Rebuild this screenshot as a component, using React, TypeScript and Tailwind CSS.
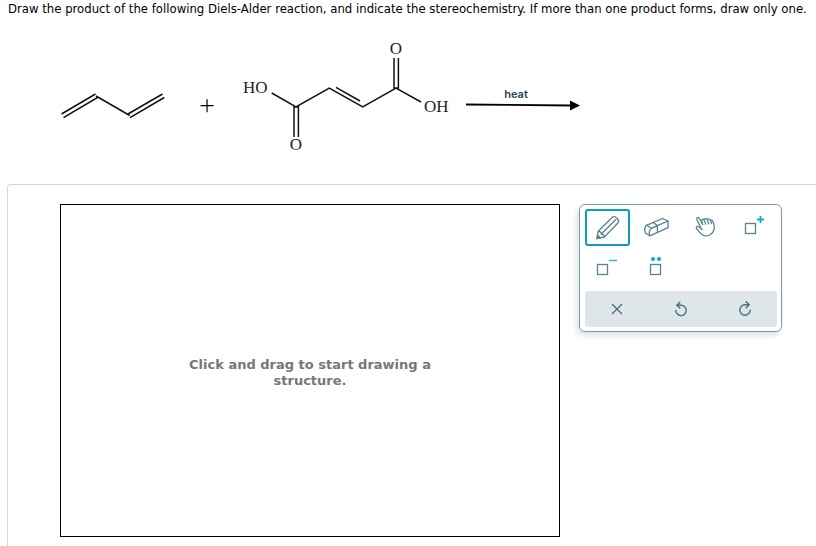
import type { ReactNode } from "react";

const tools: { label: string; icon: ReactNode; active?: boolean }[] = [
  { label: "Draw", icon: <PencilIcon />, active: true },
  { label: "Erase", icon: <EraserIcon /> },
  { label: "Move", icon: <HandIcon /> },
  { label: "Positive charge", icon: <PlusChargeIcon /> },
  { label: "Negative charge", icon: <MinusChargeIcon /> },
  { label: "Lone pair", icon: <LonePairIcon /> },
];

const actions: { label: string; icon: ReactNode }[] = [
  { label: "Clear", icon: <path d="M3 3L13 13M13 3L3 13" /> },
  {
    label: "Undo",
    icon: (
      <path d="M2.8 9A5.2 5.2 0 1 0 8 4.2H4M7.3 0.8L3.8 4.2L7.3 7.6" />
    ),
  },
  {
    label: "Redo",
    icon: (
      <path d="M13.2 8.8A5.2 5.2 0 1 1 8 3.8H12M8.7 0.4L12.2 3.8L8.7 7.2" />
    ),
  },
];

function ToolSvg({ children }: { children: ReactNode }) {
  return (
    <svg
      width="33"
      height="29"
      viewBox="0 0 33 29"
      fill="none"
      stroke="#5b8291"
      strokeWidth="1.3"
      strokeLinejoin="round"
      strokeLinecap="round"
      aria-hidden="true"
    >
      {children}
    </svg>
  );
}

function PencilIcon() {
  return (
    <ToolSvg>
      <path d="M6 25.5L7.2 18.3L21.3 4.2C23.4 2.4 28.8 6.2 27.4 9.5L13.4 24Z" />
      <path d="M7.2 18.3C9.2 18.1 10.2 19.2 10.3 21C12 21 13.2 22 13.4 24M10.3 21L24.6 6.8" />
      <path d="M6 25.5L6.5 22.2L9.3 24.6Z" fill="#5b8291" />
    </ToolSvg>
  );
}

function EraserIcon() {
  return (
    <ToolSvg>
      <path d="M6.5 12.3L22.5 5.5L28 8V14.7L9.8 22.8L5.6 20.2C4.4 17.5 4.7 14 6.5 12.3Z" />
      <path d="M13.2 9.4L17.4 12.6V19.3M17.4 12.6L28 8M6.5 12.3L11.6 15.3L17.4 12.6M11.6 15.3C9.4 17 8.8 20 9.8 22.8" />
    </ToolSvg>
  );
}

function HandIcon() {
  return (
    <ToolSvg>
      <path d="M11.8 14.5L7.8 6.3C7.2 4.6 9.2 3.6 10.2 5.1L13.6 11.3" />
      <path d="M13.6 11.3L12.8 8C12.5 6.1 14.5 5.6 15.2 7.2L16.8 11.2M15.3 7.2C15.1 5.5 17.3 5.1 18.1 6.8L19.7 10.8M18.3 7.2C18.2 5.6 20.2 5.3 21.1 6.9L22.6 10.6M21.4 7.8C21.9 6.7 23.3 7.1 23.9 8.5C25.2 11.5 26 15.5 24.3 18.4C22.6 22 18.3 23.6 15 22.6C12 21.5 9.6 18 7.6 15.7C6.5 14.1 8.2 12.9 9.8 13.7L13.2 16.8" />
    </ToolSvg>
  );
}

function PlusChargeIcon() {
  return (
    <ToolSvg>
      <rect x="7.5" y="10.5" width="10" height="10" strokeLinejoin="miter" />
      <path
        d="M19 6.5H26M22.5 3V10"
        stroke="#00b4d0"
        strokeWidth="1.8"
        strokeLinecap="butt"
      />
    </ToolSvg>
  );
}

function MinusChargeIcon() {
  return (
    <ToolSvg>
      <rect x="6.5" y="10.5" width="10" height="10" strokeLinejoin="miter" />
      <path
        d="M18 6.5H26"
        stroke="#2cc2d8"
        strokeWidth="1.6"
        strokeLinecap="butt"
      />
    </ToolSvg>
  );
}

function LonePairIcon() {
  return (
    <ToolSvg>
      <rect x="10.5" y="10.5" width="10" height="10" strokeLinejoin="miter" />
      <g fill="#00b4d0" stroke="none">
        <circle cx="13" cy="5" r="2.1" />
        <circle cx="19" cy="5" r="2.1" />
      </g>
    </ToolSvg>
  );
}

function Butadiene() {
  return (
    <svg
      width="106"
      height="116"
      viewBox="0 0 106 116"
      stroke="#111"
      strokeWidth="1.5"
      role="img"
      aria-label="1,3-butadiene"
    >
      <path d="M1.5 74L35.5 54M3.5 77.7L37.5 57.5M36 56L69.7 75.5M68 74L102.5 54M70 77.7L104.3 57.5" />
    </svg>
  );
}

function FumaricAcid() {
  return (
    <svg
      width="210"
      height="116"
      viewBox="0 0 210 116"
      role="img"
      aria-label="Fumaric acid"
    >
      <path
        d="M31.7 53L56 67L89.3 48L122.7 67L156 48L181 62M96 47.3L120 61M154 18V48H158.4V18M54 97V67H58.4V97"
        fill="none"
        stroke="#111"
        strokeWidth="1.5"
      />
      <g className="font-['Liberation_Serif',serif] text-[17px]" fill="#222">
        <text x="3" y="53">HO</text>
        <text x="184" y="72">OH</text>
        <text x="156" y="14" textAnchor="middle">O</text>
        <text x="56" y="110" textAnchor="middle">O</text>
      </g>
    </svg>
  );
}

function Toolbar() {
  return (
    <div className="w-[203px] shrink-0 rounded-md border border-[#7d9ba6] bg-white py-1 pr-1 pl-[5px] shadow-[-2px_3px_6px_rgba(60,100,110,0.2)]">
      <div className="grid grid-cols-4 gap-1">
        {tools.map((tool) => (
          <button
            key={tool.label}
            type="button"
            aria-label={tool.label}
            aria-pressed={!!tool.active}
            className={
              tool.active
                ? "flex h-[37px] items-center justify-center rounded-[3px] border-2 border-[#0a9fb5]"
                : "flex h-[37px] items-center justify-center rounded-[3px]"
            }
          >
            {tool.icon}
          </button>
        ))}
      </div>
      <div className="mt-1 grid h-9 grid-cols-3 rounded-[3px] bg-[#dfe6e8]">
        {actions.map((action) => (
          <button
            key={action.label}
            type="button"
            aria-label={action.label}
            className="flex items-center justify-center"
          >
            <svg
              width="16"
              height="16"
              viewBox="0 0 16 16"
              fill="none"
              stroke="#47707f"
              strokeWidth="1.4"
              aria-hidden="true"
            >
              {action.icon}
            </svg>
          </button>
        ))}
      </div>
    </div>
  );
}

export default function App() {
  return (
    <main className="flex min-h-screen flex-col overflow-x-hidden bg-white pl-[7px] text-black">
      <p className="h-10 pl-px font-['DejaVu_Sans_Condensed','DejaVu_Sans',sans-serif] text-[13px] leading-[18px] whitespace-nowrap">
        Draw the product of the following Diels-Alder reaction, and indicate the
        stereochemistry. If more than one product forms, draw only one.
      </p>

      {/* Reaction scheme */}
      <section className="flex h-36 items-start pl-[53px]">
        <Butadiene />
        <span className="w-[74px] pt-12 pl-2 text-center font-['Open_Sans',sans-serif] text-[28px] leading-8 font-light">
          +
        </span>
        <FumaricAcid />
        <div className="ml-4 flex w-[114px] flex-col pt-[46px]">
          <span className="pr-3.5 text-center font-['Inter',sans-serif] text-[11px] leading-4 font-semibold text-[#1d4250]">
            heat
          </span>
          <svg
            className="overflow-visible"
            width="114"
            height="12"
            viewBox="0 0 114 12"
            aria-hidden="true"
          >
            <path d="M0 2.5L106 3.5" stroke="#000" strokeWidth="1.8" />
            <path d="M104 -1.5L114 3.5L104 8.5Z" />
          </svg>
        </div>
      </section>

      {/* Answer area */}
      <section className="flex flex-1 items-start gap-[19px] rounded-tl border-t border-l border-[#d0d9d9] pt-[19px] pr-[34px] pb-2 pl-[52px]">
        <div className="flex h-[333px] flex-1 items-center justify-center border border-black pt-1">
          <p className="w-64 text-center font-['DejaVu_Sans',sans-serif] text-[13px] leading-4 font-bold text-[#777]">
            Click and drag to start drawing a structure.
          </p>
        </div>
        <Toolbar />
      </section>
    </main>
  );
}
